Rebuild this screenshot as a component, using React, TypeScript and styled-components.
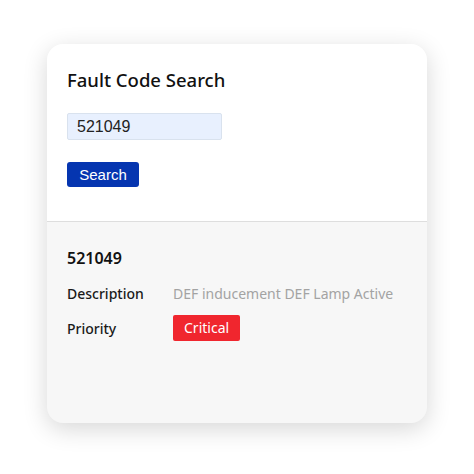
import React, { useState } from 'react';
import styled, { createGlobalStyle } from 'styled-components';

const GlobalStyle = createGlobalStyle`
  html, body {
    margin: 0;
    padding: 0;
    background: #ffffff;
  }
  body {
    font-family: "Noto Sans", "Open Sans", sans-serif;
  }
`;

const Page = styled.div`
  width: 474px;
  height: 474px;
  padding: 44px 0 0 47px;
  box-sizing: border-box;
`;

const Card = styled.div`
  width: 380px;
  height: 379px;
  border-radius: 16px;
  background: #f7f7f7;
  box-shadow: 0 6px 24px rgba(0, 0, 0, 0.16);
  overflow: hidden;
  display: flex;
  flex-direction: column;
`;

const SearchPanel = styled.section`
  background: #ffffff;
  border-bottom: 1px solid #dedede;
  padding: 22px 20px 0 20px;
  height: 178px;
  box-sizing: border-box;
`;

const Title = styled.h2`
  margin: 0;
  font-size: 18.5px;
  font-weight: 500;
  color: #111;
  line-height: 28px;
`;

const CodeInput = styled.input`
  display: block;
  margin-top: 19px;
  width: 155px;
  height: 27px;
  box-sizing: border-box;
  border: 1px solid #d9e2ee;
  border-radius: 2px;
  background: #e8f0fe;
  padding: 0 9px;
  font-family: "Liberation Sans", Arial, sans-serif;
  font-size: 16px;
  color: #222;
  outline: none;
`;

const SearchButton = styled.button`
  display: block;
  margin-top: 22px;
  width: 72px;
  height: 25px;
  border: none;
  border-radius: 3px;
  background: #0535b0;
  color: #ffffff;
  font-family: "Liberation Sans", Arial, sans-serif;
  font-size: 15px;
  padding: 0;
  cursor: pointer;
`;

const ResultPanel = styled.section`
  padding: 25px 20px 0 20px;
`;

const Code = styled.div`
  font-size: 16px;
  font-weight: 600;
  color: #111;
  line-height: 22px;
  margin-bottom: 11px;
`;

const Row = styled.div`
  display: grid;
  grid-template-columns: 106px 1fr;
  align-items: center;
  min-height: 26px;
  margin-bottom: 9px;
`;

const Label = styled.span`
  font-size: 14px;
  font-weight: 500;
  color: #1a1a1a;
`;

const Value = styled.span`
  font-size: 14px;
  color: #a3a3a3;
`;

const Badge = styled.span<{ $tone: string }>`
  justify-self: start;
  background: ${p => p.$tone};
  color: #ffffff;
  font-size: 14px;
  line-height: 26px;
  padding: 0 11px;
  border-radius: 2px;
`;

export default function App() {
  const [code, setCode] = useState('521049');

  return (
    <Page>
      <GlobalStyle />
      <Card>
        <SearchPanel>
          <Title>Fault Code Search</Title>
          <CodeInput value={code} onChange={e => setCode(e.target.value)} />
          <SearchButton>Search</SearchButton>
        </SearchPanel>
        <ResultPanel>
          <Code>521049</Code>
          <Row>
            <Label>Description</Label>
            <Value>DEF inducement DEF Lamp Active</Value>
          </Row>
          <Row>
            <Label>Priority</Label>
            <Badge $tone="#f0262e">Critical</Badge>
          </Row>
        </ResultPanel>
      </Card>
    </Page>
  );
}
